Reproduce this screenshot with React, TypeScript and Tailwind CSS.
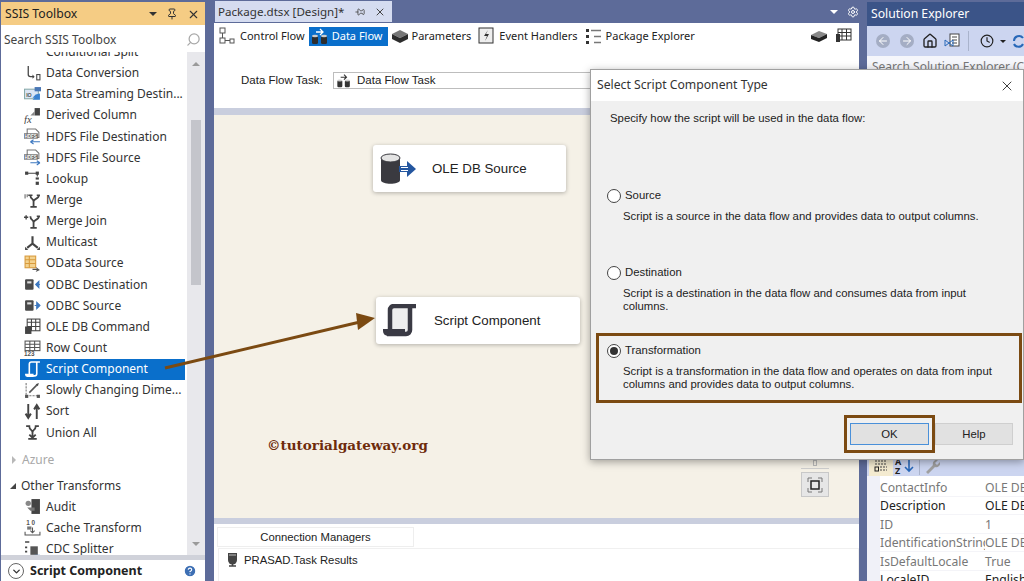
import { ReactNode } from "react";
import { ChevronDown, X, Search, Pin, Settings, Home, ArrowLeft, ArrowRight, Clock, HelpCircle } from "lucide-react";

const dark = "#444";

// small toolbox glyphs, 16x16
const glyphs: Record<string, ReactNode> = {
  split: <path d="M3 1h10v3H3zM3 5h10" stroke={dark} fill="#bbb" />,
  convert: (
    <>
      <path d="M4 1v8a2 2 0 0 0 2 2h3" stroke={dark} fill="none" strokeWidth="1.2" />
      <path d="M8 9l2 2-2 2z" fill={dark} />
      <rect x="12" y="9" width="3" height="5" fill="none" stroke={dark} />
    </>
  ),
  stream: (
    <>
      <rect x="0.5" y="3" width="13" height="9" fill="#dbe6f5" stroke="#8aa" />
      <text x="2" y="10" fontSize="5" fontWeight="700" fontFamily="Liberation Sans, sans-serif" fill="#555">IO</text>
      <rect x="10" y="1" width="6" height="4" fill="#4a77b5" />
      <path d="M15 7v6H8l2-2-2 0 3-3" fill="#3b82d0" />
    </>
  ),
  fx: (
    <>
      <text x="0" y="15" fontSize="10" fontStyle="italic" fontFamily="Liberation Serif, serif" fill={dark}>fx</text>
      <rect x="10" y="1" width="5" height="7" fill={dark} />
      <path d="M6 8l4-4v4z" fill="#888" />
    </>
  ),
  hdfsDest: (
    <>
      <path d="M3 1h8l3 3v5H3z" fill="#fff" stroke="#777" />
      <rect x="0" y="5" width="13" height="5" fill="#666" />
      <text x="0.5" y="9" fontSize="4.200" fontWeight="700" fontFamily="Liberation Sans, sans-serif" fill="#fff">HDFS</text>
      <path d="M6 13h9M6 13l3-2M6 13l3 2" stroke="#3d78c0" fill="none" />
    </>
  ),
  hdfsSrc: (
    <>
      <path d="M3 1h8l3 3v5H3z" fill="#fff" stroke="#777" />
      <rect x="0" y="5" width="13" height="5" fill="#666" />
      <text x="0.5" y="9" fontSize="4.200" fontWeight="700" fontFamily="Liberation Sans, sans-serif" fill="#fff">HDFS</text>
      <path d="M6 13h9M15 13l-3-2M15 13l-3 2" stroke="#3d78c0" fill="none" />
    </>
  ),
  lookup: (
    <>
      <path d="M3 3h10M12.500 3v3" stroke={dark} />
      <rect x="1" y="1.500" width="3" height="3" fill={dark} />
      <rect x="11" y="1.500" width="3" height="3" fill={dark} />
      <rect x="11" y="7" width="3" height="2" fill={dark} />
      <rect x="11" y="11" width="3" height="3" fill={dark} />
    </>
  ),
  merge: (
    <>
      <path d="M6 3c0 4 3 3 3 6M14 3c0 4-5 3-5 6v5" stroke={dark} fill="none" strokeWidth="1.700" />
      <path d="M6 14h6M4 3h4M12 3h3" stroke={dark} strokeWidth="1.500" />
      <path d="M1 2v4M3 2v3" stroke="#666" />
    </>
  ),
  mergeJoin: (
    <>
      <path d="M6 3c0 4 3 3 3 6M14 3c0 4-5 3-5 6v5" stroke={dark} fill="none" strokeWidth="1.700" />
      <path d="M6 14h6M12 3h3" stroke={dark} strokeWidth="1.500" />
      <path d="M0 4h4M2 2v4" stroke={dark} strokeWidth="1.300" />
    </>
  ),
  multicast: (
    <>
      <path d="M8 2v7L3 13M8 9l5 4" stroke={dark} fill="none" strokeWidth="2" />
      <path d="M1 12l3 3H1zM15 12l-3 3h3z" fill={dark} />
    </>
  ),
  odata: (
    <>
      <rect x="1" y="1" width="10" height="11" fill="#f3d28f" stroke="#d89a3c" />
      <path d="M1 4.500h10M1 8h10M5 1v11" stroke="#d89a3c" />
      <path d="M8 13h4l-1-2 4 3-4 2 1-2H8z" fill="#555" />
    </>
  ),
  odbcDest: (
    <>
      <rect x="1" y="3" width="8" height="10" rx="1" fill="#4a4a4a" />
      <rect x="3" y="5" width="4" height="2" fill="#ddd" />
      <path d="M15 8H11M11 8l3-3v6z" fill="#3d78c0" stroke="#3d78c0" />
    </>
  ),
  odbcSrc: (
    <>
      <rect x="1" y="3" width="8" height="10" rx="1" fill="#4a4a4a" />
      <rect x="3" y="5" width="4" height="2" fill="#ddd" />
      <path d="M10 8h3M15 8l-3-3v6z" fill="#3d78c0" stroke="#3d78c0" />
    </>
  ),
  oleCmd: (
    <>
      <rect x="3" y="1" width="12" height="11" fill="#fff" stroke={dark} />
      <path d="M3 4h12M3 8h12M7 1v11M11 1v11" stroke={dark} />
      <rect x="1" y="8" width="6" height="7" fill={dark} />
    </>
  ),
  rowCount: (
    <>
      <rect x="1" y="1" width="14" height="9" fill="#fff" stroke="#555" />
      <path d="M1 4h14M1 7h14M5.500 1v9M10 1v9" stroke="#555" />
      <text x="0" y="15.500" fontSize="6" fontWeight="700" fontFamily="Liberation Sans, sans-serif" fill="#555">123</text>
    </>
  ),
  script: (
    <>
      <path d="M5 13V3a2 2 0 0 1 2-2h8M12 1v11a2 2 0 0 1-2 2H3" stroke="#fff" fill="none" strokeWidth="1.500" />
      <path d="M1 12h8v3H3a2 2 0 0 1-2-2z" fill="#fff" />
    </>
  ),
  scd: (
    <>
      <path d="M2 1v12h12" stroke="#777" fill="none" strokeDasharray="2 1" />
      <path d="M5 10l7-7" stroke="#555" strokeWidth="1.500" />
      <path d="M11 2l3-1-1 3z" fill="#444" />
      <rect x="1" y="12" width="3" height="3" fill="#555" />
      <rect x="12" y="12" width="3" height="3" fill="#555" />
    </>
  ),
  sort: <path d="M4 1v12M1.500 10l2.500 4 2.500-4M12 15V3M9.500 6l2.500-4 2.500 4" stroke={dark} fill="none" strokeWidth="1.800" />,
  union: <path d="M2 2h3c0 4 3 3 3 6 0-3 3-2 3-6h3M8 8v6M4 14h8M5 10l3 3 3-3" stroke={dark} fill="none" strokeWidth="1.700" />,
  audit: (
    <>
      <rect x="7" y="1" width="8" height="14" fill={dark} />
      <circle cx="4" cy="5" r="2.500" fill="#888" />
      <path d="M3 9h7v3H6z" fill="#777" />
    </>
  ),
  cache: (
    <>
      <text x="2" y="6" fontSize="6" fontWeight="700" fontFamily="Liberation Sans, sans-serif" fill="#555">1 0</text>
      <rect x="3" y="7" width="4" height="3" fill="#777" />
      <path d="M1 12v3h14v-3M8 8v5M6 11l2 2 2-2" stroke="#555" fill="none" />
    </>
  ),
  cdc: (
    <>
      <path d="M1 1h4M1 6h2M1 10h2" stroke="#444" strokeWidth="1.500" />
      <rect x="6" y="5" width="7" height="8" fill="#555" />
      <path d="M10 14h5" stroke="#3d78c0" strokeWidth="2" />
    </>
  ),
};

function Glyph({ name }: { name: string }) {
  return (
    <svg width="17" height="17" viewBox="0 0 16 16" className="shrink-0">
      {glyphs[name]}
    </svg>
  );
}

const rows = [
  { label: "Conditional Split", icon: "split" },
  { label: "Data Conversion", icon: "convert" },
  { label: "Data Streaming Destin...", icon: "stream" },
  { label: "Derived Column", icon: "fx" },
  { label: "HDFS File Destination", icon: "hdfsDest" },
  { label: "HDFS File Source", icon: "hdfsSrc" },
  { label: "Lookup", icon: "lookup" },
  { label: "Merge", icon: "merge" },
  { label: "Merge Join", icon: "mergeJoin" },
  { label: "Multicast", icon: "multicast" },
  { label: "OData Source", icon: "odata" },
  { label: "ODBC Destination", icon: "odbcDest" },
  { label: "ODBC Source", icon: "odbcSrc" },
  { label: "OLE DB Command", icon: "oleCmd" },
  { label: "Row Count", icon: "rowCount" },
  { label: "Script Component", icon: "script", selected: true },
  { label: "Slowly Changing Dime...", icon: "scd" },
  { label: "Sort", icon: "sort" },
  { label: "Union All", icon: "union" },
];

const otherRows = [
  { label: "Audit", icon: "audit" },
  { label: "Cache Transform", icon: "cache" },
  { label: "CDC Splitter", icon: "cdc" },
];

function ToolRow({ label, icon, selected }: { label: string; icon: string; selected?: boolean }) {
  return (
    <div
      className={`ml-[19px] mr-[2px] flex h-[21.15px] items-center gap-[5px] pl-[4px] text-[12px] whitespace-nowrap ${
        selected ? "bg-[#0a6fcb] text-white" : "text-[#333]"
      }`}
    >
      <Glyph name={icon} />
      <span>{label}</span>
    </div>
  );
}

function Toolbox() {
  return (
    <div className="flex h-full w-[206px] shrink-0 flex-col pl-[1px] pr-[1px] pt-[2px]">
      <div className="flex h-[23px] shrink-0 items-center justify-between bg-[#f5cc84] pl-[4px] pr-[5px] pt-[1px] text-[12.2px] text-[#222]">
        <span className="pt-[1px]">SSIS Toolbox</span>
        <div className="flex items-center gap-[9px]">
          <span className="h-0 w-0 border-x-[4px] border-t-[4px] border-x-transparent border-t-[#333]" />
          <Pin size={12} color="#333" />
          <X size={13} color="#333" />
        </div>
      </div>
      <div className="flex h-[27px] shrink-0 items-center justify-between bg-white pl-[3px] pr-[4px] pt-[2px] text-[12px] text-[#444]">
        <span>Search SSIS Toolbox</span>
        <Search size={15} color="#a8a8a8" className="-scale-x-100" />
      </div>
      <div className="flex min-h-0 flex-1 bg-white">
        <div className="min-w-0 flex-1 overflow-hidden">
          <div className="-mt-[10.5px]">
            {rows.map((r) => (
              <ToolRow key={r.label} {...r} />
            ))}
            <div className="mt-[6px] flex h-[21px] items-center gap-[6px] pl-[11px] text-[12px] text-[#a8a8a8]">
              <span className="h-0 w-0 border-y-[4px] border-l-[4px] border-y-transparent border-l-[#b8b8b8]" />
              Azure
            </div>
            <div className="mt-[5px] flex h-[21px] items-center gap-[5px] pl-[9px] text-[12px] text-[#333]">
              <span className="h-0 w-0 border-b-[6px] border-l-[6px] border-b-[#444] border-l-transparent" />
              Other Transforms
            </div>
            {otherRows.map((r) => (
              <ToolRow key={r.label} {...r} />
            ))}
          </div>
        </div>
        <div className="flex w-[18px] shrink-0 flex-col items-center bg-[#e8e8ec]">
          <span className="mt-[10px] h-0 w-0 border-x-[4px] border-b-[4px] border-x-transparent border-b-[#9a9a9a]" />
          <div className="mt-[54px] h-[165px] w-[10px] bg-[#c4c5cb]" />
          <span className="mt-auto mb-[9px] h-0 w-0 border-x-[4px] border-t-[4px] border-x-transparent border-t-[#9a9a9a]" />
        </div>
      </div>
      <div className="h-[5px] shrink-0 bg-[#d0d2da]" />
      <div className="flex h-[21px] shrink-0 items-center justify-between bg-white pl-[7px] pr-[8px] pt-[1px]">
        <div className="flex items-center gap-[6px]">
          <span className="flex h-[16px] w-[16px] items-center justify-center rounded-full border border-[#666]">
            <ChevronDown size={11} color="#333" strokeWidth={3} />
          </span>
          <span className="text-[12.5px] font-bold text-[#222]">Script Component</span>
        </div>
        <HelpCircle size={14} color="#fff" fill="#3d6fb4" />
      </div>
    </div>
  );
}

function TabIcon({ children }: { children: ReactNode }) {
  return (
    <svg width="18" height="18" viewBox="0 0 18 18" className="shrink-0">
      {children}
    </svg>
  );
}

const cylinders = (fill: string, arrow: string) => (
  <>
    <rect x="1" y="9" width="6" height="8" rx="1.500" fill={fill} />
    <rect x="10" y="9" width="6" height="8" rx="1.500" fill={fill} />
    <ellipse cx="4" cy="9" rx="3" ry="1.300" fill="#ccc" />
    <ellipse cx="13" cy="9" rx="3" ry="1.300" fill="#ccc" />
    <path d="M5 5h7M9 2l3 3-3 3" stroke={arrow} fill="none" strokeWidth="1.300" />
  </>
);

function DesignerTabs() {
  return (
    <div className="flex h-[26px] items-center justify-between pl-[4px] pr-[6px] text-[11px] text-[#222]">
      <div className="flex items-center">
        <div className="flex items-center gap-[4px] pr-[4px]">
          <TabIcon>
            <rect x="2" y="1" width="5" height="5" fill="#fff" stroke="#555" />
            <rect x="2" y="11" width="5" height="5" fill="#fff" stroke="#555" />
            <rect x="12" y="12" width="4" height="4" fill="#fff" stroke="#555" />
            <path d="M4.500 6v5M7 13.500h5" stroke="#555" />
          </TabIcon>
          <span>Control Flow</span>
        </div>
        <div className="flex h-[19px] items-center gap-[3px] bg-[#0a6fcb] pl-[2px] pr-[5px] text-white">
          <TabIcon>{cylinders("#2d2d2d", "#fff")}</TabIcon>
          <span>Data Flow</span>
        </div>
        <div className="flex items-center gap-[3px] pl-[3px] pr-[6px]">
          <TabIcon>
            <path d="M1 7l8-4 8 4-8 4z" fill="#777" />
            <path d="M1 7v5l8 4v-5zM17 7v5l-8 4v-5z" fill="#2d2d2d" />
          </TabIcon>
          <span>Parameters</span>
        </div>
        <div className="flex items-center gap-[4px] pr-[7px]">
          <TabIcon>
            <rect x="2" y="1" width="14" height="15" fill="#eee" stroke="#333" />
            <path d="M11 3L7 9h3l-2 5 4-7H9z" fill="#333" />
          </TabIcon>
          <span>Event Handlers</span>
        </div>
        <div className="flex items-center gap-[3px]">
          <TabIcon>
            <path d="M1 2h3v3H1zM1 8h3v3H1zM1 14h3v3H1z" fill="#333" />
            <path d="M6 3.500h10M9 9.500h7M9 15.500h7" stroke="#777" strokeWidth="1.500" />
          </TabIcon>
          <span>Package Explorer</span>
        </div>
      </div>
      <div className="flex items-center gap-[6px] pr-[1px]">
        <TabIcon>
          <path d="M1 8l8-4 8 3-8 4z" fill="#888" />
          <path d="M1 8v4l8 3v-4zM17 7v4l-8 4v-4z" fill="#222" />
        </TabIcon>
        <TabIcon>
          <rect x="4" y="2" width="13" height="11" fill="#fff" stroke="#333" />
          <path d="M4 5.500h13M4 9h13M8 2v11M12.500 2v11" stroke="#333" />
          <rect x="2" y="7" width="4" height="8" fill="#333" />
        </TabIcon>
      </div>
    </div>
  );
}

function Node({ className, label, labelClass, children }: { className: string; label: string; labelClass: string; children: ReactNode }) {
  return (
    <div className={`absolute flex h-[47px] items-center rounded-[3px] bg-white shadow-[0_1px_4px_rgba(0,0,0,0.28)] ${className}`}>
      {children}
      <span className={`font-['Liberation_Sans',sans-serif] text-[13.3px] text-[#222] ${labelClass}`}>{label}</span>
    </div>
  );
}

function Designer() {
  return (
    <div className="ml-[8px] flex h-full w-[645px] shrink-0 flex-col">
      <div className="flex h-[23px] shrink-0 items-start justify-between">
        <div className="mt-[1px] ml-[1px] flex h-[21px] w-[177px] items-center whitespace-nowrap bg-[#d5dcf0] pl-[3px] pt-[1px] text-[11.6px] text-[#333]">
          <span>Package.dtsx [Design]*</span>
          <Pin size={10} color="#444" className="ml-[11px] rotate-90" />
          <X size={12} color="#444" className="ml-[9px]" />
        </div>
        <div className="mt-[6px] flex items-center gap-[9px]">
          <span className="h-0 w-0 border-x-[4px] border-t-[4px] border-x-transparent border-t-white" />
          <Settings size={12} color="#fff" />
        </div>
      </div>
      <div className="h-[85px] shrink-0 bg-white">
        <DesignerTabs />
        <div className="mt-[23px] flex items-center pl-[27px] font-['Liberation_Sans',sans-serif] text-[11.5px] text-[#222]">
          <span className="w-[92px]">Data Flow Task:</span>
          <div className="flex h-[17px] flex-1 items-center gap-[5px] border border-[#bdbdbd] pl-[2px]">
            <svg width="16" height="15" viewBox="0 0 18 18">{cylinders("#333", "#333")}</svg>
            <span>Data Flow Task</span>
          </div>
        </div>
      </div>
      <div className="h-[7px] shrink-0 bg-[#c9cede]" />
      <div className="relative flex-1 bg-[#f5f1e7]">
        <Node className="left-[159px] top-[30px] w-[193px]" label="OLE DB Source" labelClass="ml-[14px]">
          <svg width="38" height="36" viewBox="0 0 38 36" className="ml-[7px] shrink-0">
            <path d="M1 7v22c0 5 19 5 19 0V7z" fill="#3a3a40" />
            <ellipse cx="10.500" cy="7" rx="9.500" ry="4" fill="#e4e4e4" stroke="#3a3a40" />
            <path d="M19 15h8v-5l9 8-9 8v-5h-8z" fill="#24569f" />
            <path d="M21 16.500h7M21 19.500h7" stroke="#fff" />
          </svg>
        </Node>
        <Node className="left-[162px] top-[182px] w-[204px]" label="Script Component" labelClass="ml-[14px]">
          <svg width="38" height="34" viewBox="0 0 38 34" className="ml-[6px] shrink-0">
            <path d="M8 27V6a4 4 0 0 1 4-4h22M28 2v24a4 4 0 0 1-4 4H5" fill="#eee" stroke="#3a3a44" strokeWidth="4.500" />
            <path d="M1 25h22v7H6a5 5 0 0 1-5-5z" fill="#3a3a44" />
          </svg>
        </Node>
        <span className="absolute left-[53px] top-[320px] font-['DejaVu_Serif',serif] text-[13.5px] font-bold text-[#6e2b0b]">
          ©tutorialgateway.org
        </span>
        {/* zoom slider stub + fit button; the dialog covers the rest of the slider */}
        <div className="absolute left-[587px] top-[345px] flex w-[28px] flex-col items-center">
          <div className="h-[6px] w-[4px] border border-[#bbb]" />
          <div className="mt-[2px] h-px w-full bg-[#cfcfcf]" />
        </div>
        <div className="absolute left-[587px] top-[357px] flex h-[25px] w-[28px] items-center justify-center border border-[#c8c8c8] bg-[#e6e6e6]">
          <svg width="16" height="16" viewBox="0 0 16 16">
            <rect x="4" y="4" width="8" height="8" fill="none" stroke="#222" strokeWidth="1.500" />
            <path d="M1 5V1h4M11 1h4v4M15 11v4h-4M5 15H1v-4" fill="none" stroke="#777" />
          </svg>
        </div>
      </div>
      <div className="h-[6px] shrink-0 bg-[#c9cede]" />
      <div className="h-[57px] shrink-0 bg-white pl-[3px] pt-[3px] font-['Liberation_Sans',sans-serif] text-[11.3px] text-[#222]">
        <div className="flex h-[20px] w-[197px] items-center justify-center border border-[#eee]">Connection Managers</div>
        <div className="mt-[1px] ml-[1px] flex h-[40px] items-start gap-[6px] border border-[#f0f0f0] pl-[8px] pt-[3px]">
          <svg width="11" height="15" viewBox="0 0 11 15">
            <path d="M1 1h9v7a4 4 0 0 1-9 0z" fill="#444" />
            <path d="M2 3h7" stroke="#bbb" />
            <path d="M5.500 11v3M2 14h7" stroke="#444" strokeWidth="1.500" />
          </svg>
          <span>PRASAD.Task Results</span>
        </div>
      </div>
    </div>
  );
}

const props = [
  { name: "ContactInfo", value: "OLE DB", muted: true },
  { name: "Description", value: "OLE DB" },
  { name: "ID", value: "1", muted: true },
  { name: "IdentificationString", value: "OLE DB", muted: true },
  { name: "IsDefaultLocale", value: "True", muted: true },
  { name: "LocaleID", value: "English", muted: false },
];

function RightPanel() {
  return (
    <div className="ml-[8px] flex h-full flex-1 flex-col">
      <div className="mt-[2px] flex h-[24px] shrink-0 items-center bg-[#3b5488] pl-[4px] pt-[1px] text-[12.2px] text-white">Solution Explorer</div>
      <div className="flex h-[30px] shrink-0 items-center gap-[6px] bg-[#ccd5f0] pl-[9px]">
        <ArrowLeft size={14} color="#fff" className="rounded-full bg-[#a4adc4] p-[1px]" />
        <ArrowRight size={14} color="#fff" className="ml-[4px] rounded-full bg-[#a4adc4] p-[1px]" />
        <Home size={16} color="#222" className="ml-[2px]" />
        <svg width="16" height="16" viewBox="0 0 16 16">
          <rect x="6" y="1" width="9" height="12" fill="#fff" stroke="#444" />
          <path d="M8 4h5M8 7h5M8 10h5" stroke="#444" />
          <path d="M1 7l4 3-4 3zM9 7l-4 3 4 3z" fill="none" stroke="#2868b8" />
        </svg>
        <span className="mx-[2px] h-[20px] w-px bg-[#a9b3cc]" />
        <Clock size={14} color="#222" className="ml-[3px]" />
        <span className="h-0 w-0 border-x-[3px] border-t-[3px] border-x-transparent border-t-[#222]" />
        <svg width="12" height="16" viewBox="0 0 12 16">
          <path d="M2 8a5 5 0 0 1 9-3M2 11a5 5 0 0 0 9 0" fill="none" stroke="#2868b8" strokeWidth="2" />
        </svg>
      </div>
      <div className="h-[22px] shrink-0 overflow-hidden bg-[#f5f6fb] pl-[5px] pt-[3px] text-[12px] leading-[16px] text-[#777] whitespace-nowrap">
        Search Solution Explorer (C
      </div>
      <div className="flex-1 bg-[#f5f6fb]" />
      <div className="flex h-[20px] shrink-0 items-center gap-[2px] bg-[#ccd5f0] pl-[2px]">
        <div className="flex h-[20px] w-[24px] items-center justify-center bg-[#f4ebd0]">
          <svg width="14" height="14" viewBox="0 0 14 14">
            <path d="M1 2h12M1 5h12M6 8h7M6 11h7" stroke="#444" strokeDasharray="2 1" />
            <rect x="1" y="8" width="3.500" height="4" fill="none" stroke="#222" />
          </svg>
        </div>
        <span className="text-[9px] font-bold leading-[9px] text-[#222]">
          A
          <br />Z
        </span>
        <svg width="12" height="14" viewBox="0 0 12 14">
          <path d="M6 1v10M2 8l4 4 4-4" fill="none" stroke="#2868b8" strokeWidth="1.600" />
        </svg>
        <span className="mx-[2px] h-[18px] w-px bg-[#a9b3cc]" />
        <svg width="16" height="16" viewBox="0 0 16 16">
          <path d="M2 14l7-7a4 4 0 0 1 5-5l-3 3 2 2 3-3a4 4 0 0 1-5 5l-7 7z" fill="#a0a0a0" />
        </svg>
      </div>
      <div className="flex h-[105px] shrink-0 overflow-hidden bg-white">
        <div className="w-[13px] shrink-0 bg-[#f0f1f8]" />
        <div className="min-w-0 flex-1 pt-[2px] text-[12.2px]">
          {props.map((p) => (
            <div key={p.name} className={`flex h-[18.5px] items-center whitespace-nowrap border-b border-[#f4f4f8] pt-[2px] ${p.muted ? "text-[#777]" : "text-[#222]"}`}>
              <span className="w-[105px] shrink-0 overflow-hidden">{p.name}</span>
              <span>{p.value}</span>
            </div>
          ))}
        </div>
      </div>
    </div>
  );
}

function Option({ label, checked, children }: { label: string; checked?: boolean; children: ReactNode }) {
  return (
    <div>
      <div className="flex items-center gap-[4px]">
        <span className="flex h-[14px] w-[14px] items-center justify-center rounded-full border border-[#444] bg-white">
          {checked && <span className="h-[8px] w-[8px] rounded-full bg-[#333]" />}
        </span>
        <span>{label}</span>
      </div>
      <p className="mt-[6px] pl-[16px] leading-[13px]">{children}</p>
    </div>
  );
}

function ScriptDialog() {
  return (
    <div className="absolute left-[590px] top-[69px] flex h-[391px] w-[434px] flex-col border border-[#a0a0a0] bg-[#f0f0f0] font-['Liberation_Sans',sans-serif] text-[11.35px] text-[#222] shadow-[0_2px_8px_rgba(0,0,0,0.35)]">
      <div className="flex h-[31px] shrink-0 items-center justify-between bg-white pl-[6px] pr-[8px] font-['Noto_Sans',sans-serif] text-[12.2px] text-[#333]">
        <span>Select Script Component Type</span>
        <X size={16} color="#222" strokeWidth={1.300} />
      </div>
      <p className="mt-[11px] pl-[19px] leading-[13px]">Specify how the script will be used in the data flow:</p>
      <div className="mt-[62px] pl-[16px]">
        <Option label="Source">Script is a source in the data flow and provides data to output columns.</Option>
      </div>
      <div className="mt-[41px] pl-[16px]">
        <Option label="Destination">
          Script is a destination in the data flow and consumes data from input
          <br />
          columns.
        </Option>
      </div>
      <div className="mt-[20px] ml-[5px] mr-[1px] h-[70px] border-[3px] border-[#7b4a12] pl-[8px] pt-[6px]">
        <Option label="Transformation" checked>
          Script is a transformation in the data flow and operates on data from input
          <br />
          columns and provides data to output columns.
        </Option>
      </div>
      <div className="mt-[12px] flex items-center pl-[253px]">
        <div className="flex h-[38px] w-[91px] items-center justify-center border-[3px] border-[#7b4a12]">
          <div className="flex h-[22px] w-[79px] items-center justify-center border border-[#4a90d9] bg-[#e1e1e1]">OK</div>
        </div>
        <div className="flex h-[22px] w-[78px] items-center justify-center border border-[#cfcfcf] bg-[#e1e1e1]">Help</div>
      </div>
    </div>
  );
}

export default function App() {
  return (
    <div className="relative flex h-[581px] w-[1024px] overflow-hidden bg-[#5d6b99] font-['Noto_Sans',sans-serif]">
      <Toolbox />
      <Designer />
      <RightPanel />
      <ScriptDialog />
      {/* brown callout arrow from the selected row to the node */}
      <svg width="1024" height="581" className="pointer-events-none absolute left-0 top-0">
        <path d="M165 368L360 322" stroke="#7b4a12" strokeWidth="3" />
        <path d="M375 318L356 313L358 330Z" fill="#7b4a12" />
      </svg>
    </div>
  );
}
